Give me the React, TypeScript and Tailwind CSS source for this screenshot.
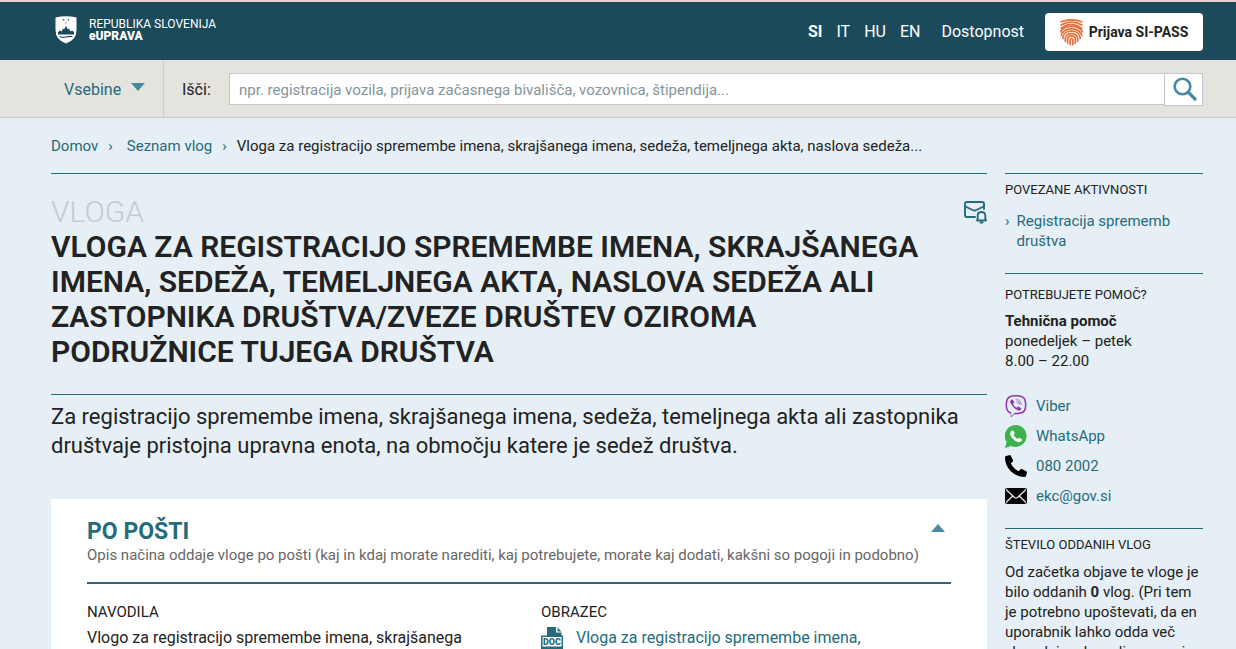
import type { ReactNode } from 'react'
import { FaPhoneAlt, FaViber } from 'react-icons/fa'

const LANGUAGES = ['SI', 'IT', 'HU', 'EN']

// ─── Icons ────────────────────────────────────────────────────────────────────
function CoatOfArms() {
  return (
    <svg width="22" height="28" viewBox="0 0 22 28" aria-hidden>
      <path d="M0.5 1.5Q11-1 21.5 1.5V14Q21.5 24 11 27.5Q0.5 24 0.5 14Z" fill="#fff" />
      <path d="M3 18.5V16L5 14.5L6.5 15.5L8 12.5L9 13.5L11 10L13 13.5L14 12.5L15.5 15.5L17 14.5L19 16V18.5Z" fill="#1b4a5b" />
      <path d="M4.5 20.5Q7.5 22 11 21T17.5 20.5" stroke="#1b4a5b" strokeWidth="1.1" fill="none" />
      <circle cx="8.5" cy="3.8" r=".8" fill="#1b4a5b" />
      <circle cx="13.5" cy="3.8" r=".8" fill="#1b4a5b" />
      <circle cx="11" cy="7" r=".6" fill="#1b4a5b" />
    </svg>
  )
}

function FingerprintShield() {
  return (
    <svg width="23" height="27" viewBox="0 0 24 28" fill="none" stroke="#e8703a" strokeWidth="1.8" aria-hidden>
      <clipPath id="shield">
        <path d="M0 0H24V15Q24 23 12 28Q0 23 0 15Z" />
      </clipPath>
      <g clipPath="url(#shield)">
        <path d="M0.5 3Q12-1.5 23.5 3" />
        <path d="M0.5 6.5Q12 0 23.5 6.5" />
        <path d="M0.5 10Q11 1.5 23.5 10" />
        <path d="M0.5 14Q2.5 7.5 12 7.5T23.5 14" />
        <path d="M1 18Q3 10.3 12 10.3T23 18" />
        <path d="M3 21V19C4 10.5 20 10.5 21 19V21" />
        <path d="M5.5 24V20C6 13.5 18 13.5 18.5 20V24" />
        <path d="M8 26V20.5C8 16.5 16 16.5 16 20.5V26" />
        <path d="M10.6 28V21.5Q12 19 13.4 21.5V28" />
      </g>
    </svg>
  )
}

function SearchIcon() {
  return (
    <svg width="24" height="24" viewBox="0 0 24 24" fill="none" stroke="#468aa3" aria-hidden>
      <circle cx="9.5" cy="9.5" r="7.8" strokeWidth="2.6" />
      <path d="M15.2 15.2L22 22" strokeWidth="3.2" strokeLinecap="round" />
    </svg>
  )
}

function MailBellIcon() {
  return (
    <svg width="24" height="24" viewBox="0 0 24 24" fill="none" stroke="#256b7c" strokeWidth="1.9" strokeLinejoin="round" strokeLinecap="round" aria-hidden>
      <path d="M12 17H4Q2 17 2 15V4Q2 2 4 2H19Q21 2 21 4V9" />
      <path d="M2.5 6.5L9.5 10Q11.5 11 13.5 10L20.5 6.5" />
      <path d="M14 20.5H23L22.3 19V15.5Q22.3 12 18.5 12T14.7 15.5V19Z" />
      <path d="M17.5 22.5H19.5" />
    </svg>
  )
}

function WhatsAppIcon() {
  return (
    <svg width="22" height="23" viewBox="0 0 22 23" aria-hidden>
      <path d="M11 0A11 11 0 1 1 6 21L0 23L1.6 17A11 11 0 0 1 11 0Z" fill="#3fb14e" />
      <path d="M7.3 5.2Q8.3 5 8.7 6L9.5 8Q9.7 8.7 8.5 10Q10 12.8 12.7 14Q13.8 12.6 14.4 12.9L16.7 14Q17.3 14.5 16.7 15.8Q15.7 17.5 13.5 17.2Q10.5 16.6 7.8 13.8T5.2 8.5Q5.3 6 7.3 5.2Z" fill="#fff" />
    </svg>
  )
}

function PhoneIcon() {
  return (
    <svg width="22" height="22" viewBox="0 0 22 22" aria-hidden>
      <path d="M4.2 0.2Q5.2-0.2 5.8 0.7L8 5.2Q8.3 6.2 7.5 6.9L5.8 8.3Q8.3 13.7 13.7 16.2L15.1 14.5Q15.8 13.7 16.8 14L21.3 16.2Q22.2 16.8 21.9 17.8L21 21Q20.7 22 19.6 22Q11.500 21.800 5.800 16.200T0 2.400Q0 1.300 1 1Z" fill="#000" />
    </svg>
  )
}

function EnvelopeIcon() {
  return (
    <svg width="22" height="16" viewBox="0 0 22 16" aria-hidden>
      <rect width="22" height="16" rx="2" fill="#000" />
      <path d="M1 1.5L9.5 9.5Q11 10.7 12.5 9.5L21 1.5M1 14.5L7.8 8M21 14.5L14.2 8" stroke="#e5eff5" strokeWidth="1.2" fill="none" />
    </svg>
  )
}

function DocIcon() {
  return (
    <svg width="22" height="24" viewBox="0 0 22 24" className="mt-[2px] shrink-0" aria-hidden>
      <path d="M6 0H15V5.5H20.5V10H6Z" fill="#256b7c" />
      <path d="M16.5 0.5L20.5 4.5H16.5Z" fill="#256b7c" />
      <rect y="8.5" width="22" height="15.5" fill="#256b7c" />
      <rect x="1.5" y="10" width="19" height="9.5" fill="#fff" />
      <text x="11" y="18" textAnchor="middle" fontSize="9" fontWeight="900" fontFamily="Roboto, sans-serif" fill="#256b7c">DOC</text>
    </svg>
  )
}

// ─── Header ───────────────────────────────────────────────────────────────────
function Header() {
  return (
    <header className="flex h-[60px] items-center justify-between border-t-2 border-[#e3cfcf] bg-[#1b4a5b] pt-[2px] pl-[55px] pr-[33px] text-white">
      <a href="#" className="mb-1 flex items-center gap-3">
        <CoatOfArms />
        <span className="text-xs leading-3">
          REPUBLIKA SLOVENIJA
          <br />
          <b className="font-black">eUPRAVA</b>
        </span>
      </a>
      <div className="flex items-center text-base">
        <nav className="flex gap-[14px]" aria-label="Jezik">
          {LANGUAGES.map((lang) => (
            <a key={lang} href="#" className={lang === 'SI' ? 'font-bold' : ''}>{lang}</a>
          ))}
        </nav>
        <a href="#" className="ml-[21px]">Dostopnost</a>
        <button className="ml-[21px] flex h-[38px] w-[158px] items-center justify-center gap-[6px] rounded bg-white text-sm font-bold text-[#222]">
          <FingerprintShield />
          Prijava SI-PASS
        </button>
      </div>
    </header>
  )
}

function SearchBar() {
  return (
    <div className="flex h-[58px] items-stretch border-b border-[#c8cac8] bg-[#e4e3de] pr-[33px]">
      <button className="flex w-[164px] items-center gap-[10px] border-r border-[#cccdca] pt-[2px] pl-16 text-base text-[#256b7c]">
        Vsebine
        <svg width="14" height="8" viewBox="0 0 14 8" className="mb-[6px]" aria-hidden>
          <path d="M0 0H14L7 8Z" fill="#468aa3" />
        </svg>
      </button>
      <form className="flex flex-1 items-start pt-[13px] pl-[18px]" role="search">
        <label htmlFor="q" className="w-[47px] text-base leading-[34px]">Išči:</label>
        <input
          id="q"
          type="text"
          placeholder="npr. registracija vozila, prijava začasnega bivališča, vozovnica, štipendija..."
          className="h-8 min-w-0 flex-1 border border-[#c5c8ca] bg-white px-[9px] pt-[2px] text-[15px] placeholder:text-[#83959c]"
        />
        <button type="button" aria-label="Išči" className="-ml-px flex h-[33px] w-[39px] items-center justify-center border border-[#c5c8ca] bg-white pb-[2px] pl-[2px]">
          <SearchIcon />
        </button>
      </form>
    </div>
  )
}

function Breadcrumbs() {
  return (
    <nav className="flex h-[55px] items-center gap-[10px] pt-[2px] text-[15px]" aria-label="Drobtinice">
      <a href="#" className="text-[#256b7c]">Domov</a>
      <span className="mr-1 text-[#256b7c]">›</span>
      <a href="#" className="text-[#256b7c]">Seznam vlog</a>
      <span className="text-[#256b7c]">›</span>
      <span>Vloga za registracijo spremembe imena, skrajšanega imena, sedeža, temeljnega akta, naslova sedeža...</span>
    </nav>
  )
}

// ─── Main column ──────────────────────────────────────────────────────────────
function PostCard() {
  return (
    <section className="mt-[39px] bg-white px-9 pb-9 pt-[18px]">
      <div className="flex items-start justify-between border-b-2 border-[#30667a] pb-[17px]">
        <div>
          <h2 className="pt-[2px] text-[23px] leading-[26px] font-bold text-[#256b7c]">PO POŠTI</h2>
          <p className="text-[15px] leading-5 text-[#666]">
            Opis načina oddaje vloge po pošti (kaj in kdaj morate narediti, kaj potrebujete, morate kaj dodati, kakšni so pogoji in podobno)
          </p>
        </div>
        <button aria-label="Skrij" className="mr-[6px] mt-[7px] shrink-0">
          <svg width="14" height="8" viewBox="0 0 14 8" aria-hidden>
            <path d="M0 8H14L7 0Z" fill="#468aa3" />
          </svg>
        </button>
      </div>
      <div className="grid grid-cols-2 gap-11 pt-4">
        <div>
          <h3 className="text-[15px] leading-6">NAVODILA</h3>
          <p className="pt-px text-base leading-[26px]">
            Vlogo za registracijo spremembe imena, skrajšanega
          </p>
        </div>
        <div>
          <h3 className="text-[15px] leading-6">OBRAZEC</h3>
          <a href="#" className="flex gap-[13px] pt-px text-base leading-[26px] text-[#256b7c]">
            <DocIcon />
            Vloga za registracijo spremembe imena,
          </a>
        </div>
      </div>
    </section>
  )
}

// ─── Sidebar ──────────────────────────────────────────────────────────────────
function ContactLink({ icon, children }: { icon: ReactNode; children: ReactNode }) {
  return (
    <li>
      <a href="#" className="flex h-[30px] items-center gap-[9px] text-[15px] text-[#256b7c]">
        {icon}
        {children}
      </a>
    </li>
  )
}

function Sidebar() {
  return (
    <aside className="w-[198px] shrink-0 text-[15px] leading-5">
      <section className="h-[100px] border-t border-[#256b7c] pt-[6px]">
        <h2 className="text-[13px] leading-5">POVEZANE AKTIVNOSTI</h2>
        <a href="#" className="mt-[11px] flex gap-[7px] text-[#256b7c]">
          <span>›</span>
          Registracija sprememb društva
        </a>
      </section>
      <section className="h-[255px] border-t border-[#256b7c] pt-[11px]">
        <h2 className="text-[13px] leading-5">POTREBUJETE POMOČ?</h2>
        <p className="mt-[6px]">
          <b>Tehnična pomoč</b>
          <br />
          ponedeljek – petek
          <br />
          8.00 – 22.00
        </p>
        <ul className="mt-5">
          <ContactLink icon={<FaViber size={22} color="#8e3dac" />}>Viber</ContactLink>
          <ContactLink icon={<WhatsAppIcon />}>WhatsApp</ContactLink>
          <ContactLink icon={<PhoneIcon />}>080 2002</ContactLink>
          <ContactLink icon={<EnvelopeIcon />}>ekc@gov.si</ContactLink>
        </ul>
      </section>
      <section className="border-t border-[#256b7c] pt-[6px]">
        <h2 className="text-[13px] leading-5">ŠTEVILO ODDANIH VLOG</h2>
        <p className="mt-[7px]">
          Od začetka objave te vloge je bilo oddanih <b>0</b> vlog. (Pri tem je potrebno upoštevati, da en uporabnik lahko odda več vlog, dejansko veljavna pa je
        </p>
      </section>
    </aside>
  )
}

export default function App() {
  return (
    <div className="h-screen overflow-hidden bg-[#e5eff5] font-['Roboto','Noto_Sans',sans-serif] text-[#222]">
      <Header />
      <SearchBar />
      <div className="pl-[51px] pr-[33px]">
        <Breadcrumbs />
        <div className="flex gap-[18px]">
          <main className="min-w-0 flex-1 border-t border-[#256b7c]">
            <div className="flex items-start justify-between border-b border-[#256b7c] pb-[25px] pt-5">
              <h1 className="pr-8 text-[30px] leading-[35px] font-semibold">
                <span className="block font-light text-[#c5cacd]">VLOGA</span>
                VLOGA ZA REGISTRACIJO SPREMEMBE IMENA, SKRAJŠANEGA IMENA, SEDEŽA, TEMELJNEGA AKTA, NASLOVA SEDEŽA ALI ZASTOPNIKA DRUŠTVA/ZVEZE DRUŠTEV OZIROMA PODRUŽNICE TUJEGA DRUŠTVA
              </h1>
              <button aria-label="Obveščanje" className="mt-[6px] shrink-0">
                <MailBellIcon />
              </button>
            </div>
            <p className="pt-[7px] text-[22px] leading-[29px]">
              Za registracijo spremembe imena, skrajšanega imena, sedeža, temeljnega akta ali zastopnika društvaje pristojna upravna enota, na območju katere je sedež društva.
            </p>
            <PostCard />
          </main>
          <Sidebar />
        </div>
      </div>
    </div>
  )
}
